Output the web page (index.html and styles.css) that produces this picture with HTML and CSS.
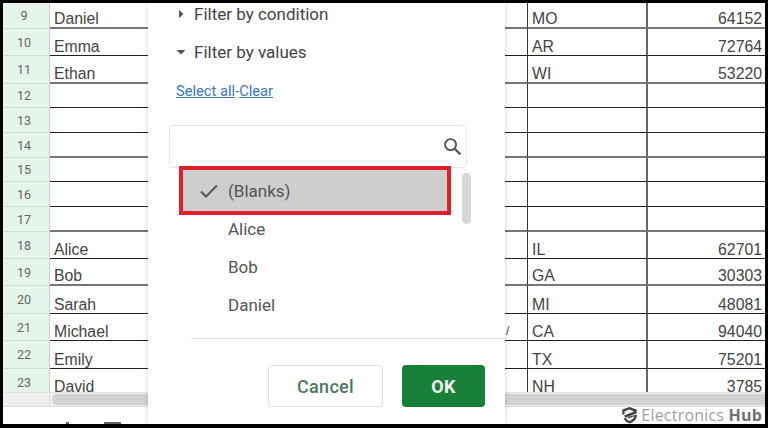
FILE: index.html
```html
<!DOCTYPE html>
<html lang="en">
<head>
<meta charset="utf-8">
<title>Filter by values</title>
<link rel="stylesheet" href="styles.css">
</head>
<body>
<div class="frame">
  <div class="rows">
    <div class="row thick"><div class="num">9</div><div class="cell">Daniel</div><div class="cell edge"></div><div class="cell state">MO</div><div class="cell zip">64152</div></div>
    <div class="row"><div class="num">10</div><div class="cell">Emma</div><div class="cell edge"></div><div class="cell state">AR</div><div class="cell zip">72764</div></div>
    <div class="row thick"><div class="num">11</div><div class="cell">Ethan</div><div class="cell edge"></div><div class="cell state">WI</div><div class="cell zip">53220</div></div>
    <div class="row"><div class="num">12</div><div class="cell"></div><div class="cell edge"></div><div class="cell state"></div><div class="cell zip"></div></div>
    <div class="row"><div class="num">13</div><div class="cell"></div><div class="cell edge"></div><div class="cell state"></div><div class="cell zip"></div></div>
    <div class="row thick"><div class="num">14</div><div class="cell"></div><div class="cell edge"></div><div class="cell state"></div><div class="cell zip"></div></div>
    <div class="row"><div class="num">15</div><div class="cell"></div><div class="cell edge"></div><div class="cell state"></div><div class="cell zip"></div></div>
    <div class="row"><div class="num">16</div><div class="cell"></div><div class="cell edge"></div><div class="cell state"></div><div class="cell zip"></div></div>
    <div class="row thick"><div class="num">17</div><div class="cell"></div><div class="cell edge"></div><div class="cell state"></div><div class="cell zip"></div></div>
    <div class="row"><div class="num">18</div><div class="cell">Alice</div><div class="cell edge"></div><div class="cell state">IL</div><div class="cell zip">62701</div></div>
    <div class="row thick"><div class="num">19</div><div class="cell">Bob</div><div class="cell edge"></div><div class="cell state">GA</div><div class="cell zip">30303</div></div>
    <div class="row"><div class="num">20</div><div class="cell">Sarah</div><div class="cell edge"></div><div class="cell state">MI</div><div class="cell zip">48081</div></div>
    <div class="row"><div class="num">21</div><div class="cell">Michael</div><div class="cell edge">/</div><div class="cell state">CA</div><div class="cell zip">94040</div></div>
    <div class="row"><div class="num">22</div><div class="cell">Emily</div><div class="cell edge"></div><div class="cell state">TX</div><div class="cell zip">75201</div></div>
    <div class="row"><div class="num">23</div><div class="cell">David</div><div class="cell edge"></div><div class="cell state">NH</div><div class="cell zip">3785</div></div>
  </div>
  <div class="scrollbar">
    <div class="corner"></div>
    <div class="thumb"></div>
  </div>
  <div class="footer">
    <div class="tabs">
      <span class="tab-plus"></span>
      <span class="tab-menu"></span>
    </div>
    <div class="brand">
      <svg class="brand-icon" viewBox="0 0 18 20" aria-hidden="true">
        <path d="M9 1 L17 4 V8 L4.5 13 L3 10.5 L14 6 L9 3.8 L3.5 6 V9 L1 10 V4 Z" fill="#444"/>
        <path d="M17 9.5 V11 C17 15 13 18 9 19.5 C6 18.4 3.6 16.5 2.4 14 L5 13 C6 14.9 7.3 16 9 16.8 C11.5 15.7 13.8 13.8 14.4 11.5 L8 14 L6.8 12.2 Z" fill="#444"/>
      </svg>
      <span class="brand-name">Electronics <b>Hub</b></span>
    </div>
  </div>

  <div class="modal">
    <div class="filter-row">
      <svg class="caret" viewBox="0 0 10 10" aria-hidden="true"><path d="M3 1 L7.5 5 L3 9 Z"/></svg>
      <span>Filter by condition</span>
    </div>
    <div class="filter-row second">
      <svg class="caret" viewBox="0 0 10 10" aria-hidden="true"><path d="M0.5 3 H9.5 L5 7.5 Z"/></svg>
      <span>Filter by values</span>
    </div>
    <div class="links"><a class="link">Select all</a><span class="dash">-</span><a class="link">Clear</a></div>
    <div class="search">
      <svg class="search-icon" viewBox="0 0 20 20" aria-hidden="true">
        <circle cx="8" cy="8" r="5.8" fill="none" stroke="#555" stroke-width="2"/>
        <path d="M12.3 12.3 L18.3 18.3" stroke="#555" stroke-width="2.4" fill="none"/>
      </svg>
    </div>
    <div class="list">
      <div class="items">
        <div class="item selected">
          <svg class="check" viewBox="0 0 18 14" aria-hidden="true"><path d="M1 7.5 L6 12.5 L17 1.5" fill="none" stroke="#555" stroke-width="2"/></svg>
          <span>(Blanks)</span>
        </div>
        <div class="item">Alice</div>
        <div class="item">Bob</div>
        <div class="item">Daniel</div>
      </div>
      <div class="list-scroll"></div>
    </div>
    <div class="divider"></div>
    <div class="actions">
      <button class="btn cancel">Cancel</button>
      <button class="btn ok">OK</button>
    </div>
  </div>
</div>
</body>
</html>
```
FILE: styles.css
```css
* { box-sizing: border-box; }
html, body { margin: 0; padding: 0; }
body { width: 768px; height: 428px; background: #000; padding: 3px 3px 4px; overflow: hidden; }

.frame {
  position: relative;
  width: 762px;
  height: 421px;
  background: #fff;
  overflow: hidden;
  display: flex;
  flex-direction: column;
  font-family: "Liberation Sans", Arial, sans-serif;
}

.rows {
  height: 389px;
  flex: none;
  overflow: hidden;
  display: grid;
  grid-template-rows: 26px 27px 28px 24px 25px 25px 24px 25px 25px 27px 27px 28px 27px 28px 27px;
}
.row {
  display: grid;
  grid-template-columns: 47px 455px 23px 120px 117px;
  font-size: 15.8px;
  color: #444;
}
.num {
  background: #e6f5ec;
  border-right: 1px solid #c4d3ca;
  border-bottom: 1px solid #cfe0d5;
  display: flex;
  align-items: center;
  justify-content: center;
  padding-right: 4px;
  font-family: Roboto, sans-serif;
  font-size: 12.5px;
  color: #666;
}
.cell {
  border-bottom: 1px solid #222;
  display: flex;
  align-items: flex-end;
  padding-left: 4px;
  line-height: 17px;
  min-height: 0;
}
.thick .cell { border-bottom: 2px solid #777; }
.edge { padding-left: 1px; border-right: 1px solid #333; font-size: 12px; }
.state { border-right: 2px solid #666; }
.zip { justify-content: flex-end; padding: 0 3px 0 0; }

.scrollbar {
  flex: none;
  height: 15px;
  display: flex;
  background: #efefef;
  border-top: 1px solid #e2e2e2;
  border-bottom: 1px solid #dcdcdc;
}
.corner {
  width: 47px;
  flex: none;
  border-right: 1px solid #d8d8d8;
}
.thumb {
  flex: 1;
  height: 11px;
  margin: 1px 0 0 2px;
  border-radius: 6px 0 0 6px;
  background: #d2d2d2;
}

.footer {
  flex: 1;
  display: flex;
  justify-content: space-between;
  align-items: flex-start;
  min-height: 0;
}
.tabs {
  display: flex;
  align-items: flex-start;
  padding: 15px 0 0 63px;
}
.tab-plus { width: 3px; height: 2px; background: #666; }
.tab-menu { width: 17px; height: 2px; margin-left: 35px; background: #666; }
.brand {
  display: flex;
  align-items: center;
  gap: 3px;
  padding: 0 3px 0 0;
  margin-top: -2px;
  color: #a0a0a0;
  font-family: "Open Sans", sans-serif;
  font-size: 16px;
  letter-spacing: .2px;
  line-height: 20px;
}
.brand-icon { width: 17px; height: 18px; }
.brand-name b { color: #707070; font-weight: 700; }

.modal {
  position: absolute;
  left: 145px;
  top: 0;
  bottom: 0;
  width: 357px;
  background: #fff;
  box-shadow: 0 0 6px rgba(0,0,0,.16);
  font-family: Roboto, sans-serif;
  color: #444;
  display: flex;
  flex-direction: column;
}
.filter-row {
  height: 22px;
  display: flex;
  align-items: center;
  gap: 8px;
  padding-left: 28px;
  font-size: 17px;
  flex: none;
}
.filter-row.second { margin-top: 16px; }
.caret { width: 10px; height: 10px; fill: #555; flex: none; }
.links {
  margin-top: 17px;
  height: 22px;
  padding-left: 28px;
  font-size: 14.7px;
  line-height: 22px;
  flex: none;
}
.link { color: #3a76c4; text-decoration: underline; }
.dash { color: #3a76c4; }
.search {
  margin: 23px 0 0 21px;
  width: 298px;
  height: 43px;
  flex: none;
  border: 1px solid #e6e6e6;
  border-radius: 5px;
  display: flex;
  align-items: center;
  justify-content: flex-end;
  padding: 0 4px 0 0;
}
.search-icon { width: 19px; height: 19px; }
.list {
  margin: -2px 0 0 31px;
  height: 172px;
  flex: none;
  display: flex;
  gap: 11px;
  overflow: hidden;
}
.items { width: 272px; flex: none; }
.item {
  height: 38px;
  display: flex;
  align-items: center;
  padding-left: 49px;
  font-size: 17px;
  color: #555;
}
.item.selected {
  height: 49px;
  margin-bottom: -5px;
  padding-left: 17px;
  gap: 10px;
  background: #cecece;
  border: 4px solid #e0202b;
}
.check { width: 18px; height: 14px; flex: none; }
.list-scroll {
  width: 9px;
  height: 51px;
  margin-top: 7px;
  border-radius: 5px;
  background: #d6d8dc;
  flex: none;
}
.divider {
  margin-left: 43px;
  height: 1px;
  background: #e2e2e2;
  flex: none;
}
.actions {
  display: flex;
  gap: 19px;
  padding: 26px 0 0 120px;
}
.btn {
  height: 42px;
  border-radius: 4px;
  font-family: Roboto, sans-serif;
  font-size: 18px;
  font-weight: 500;
  letter-spacing: .3px;
  padding: 0;
}
.cancel {
  width: 115px;
  background: #fff;
  border: 1px solid #dedede;
  color: #4c7a60;
}
.ok {
  width: 83px;
  background: #188038;
  border: 0;
  color: #eef5f0;
  font-weight: 700;
}
```
